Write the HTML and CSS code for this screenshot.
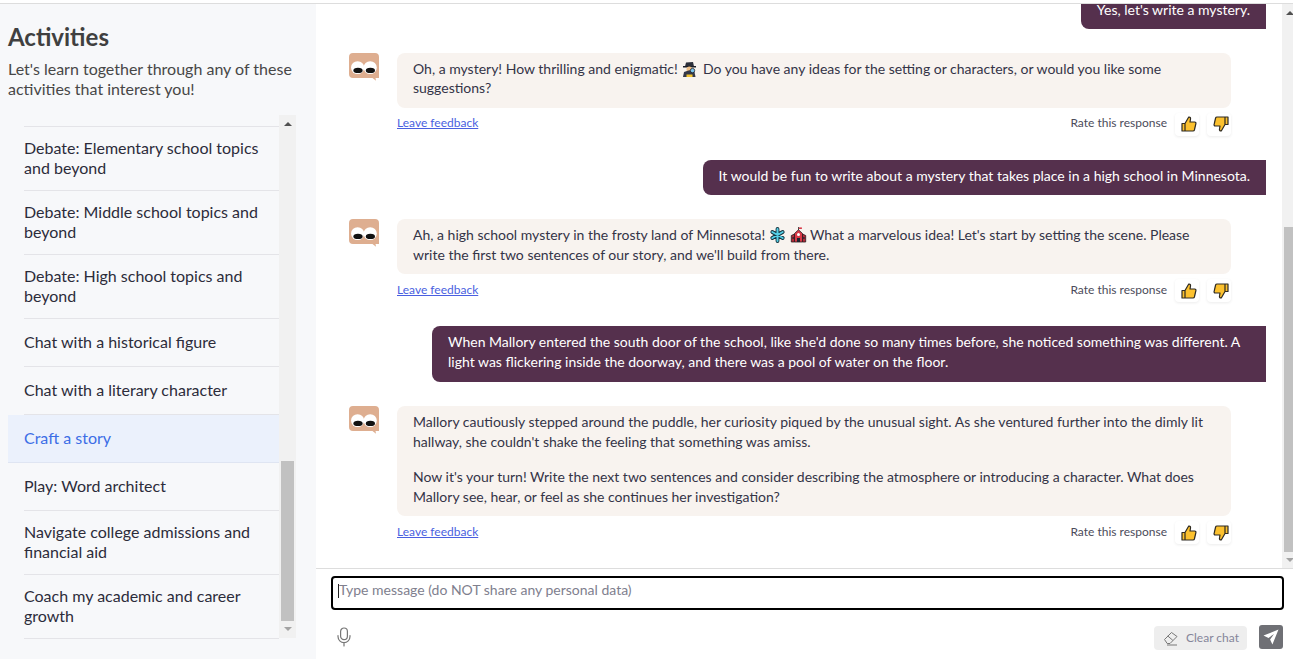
FILE: index.html
```html
<!DOCTYPE html>
<html lang="en">
<head>
<meta charset="utf-8">
<title>Activities</title>
<link rel="stylesheet" href="styles.css">
</head>
<body>
<div class="app">
  <aside class="sidebar">
    <h1 class="title">Activities</h1>
    <p class="intro">Let's learn together through any of these activities that interest you!</p>
    <div class="picker">
      <ul class="list">
        <li class="item">Debate: Elementary school topics and beyond</li>
        <li class="item">Debate: Middle school topics and beyond</li>
        <li class="item">Debate: High school topics and beyond</li>
        <li class="item single">Chat with a historical figure</li>
        <li class="item single">Chat with a literary character</li>
        <li class="item single active">Craft a story</li>
        <li class="item single">Play: Word architect</li>
        <li class="item">Navigate college admissions and financial aid</li>
        <li class="item">Coach my academic and career growth</li>
      </ul>
      <div class="bar side-bar">
        <span class="arrow up"></span>
        <span class="side-gap"></span>
        <span class="thumb"></span>
        <span class="arrow down"></span>
      </div>
    </div>
  </aside>
  <main class="chat">
    <div class="log-wrap">
      <div class="log">
        <div class="user-row"><div class="user-msg short">Yes, let's write a mystery.</div></div>
        <div class="bot-row">
          <svg class="avatar" viewBox="0 0 30 30"><use href="#face"/></svg>
          <div class="bot-body">
            <div class="bot-msg">Oh, a mystery! How thrilling and enigmatic! <svg class="emoji detective" viewBox="0 0 16 16"><path fill="#2c2f3a" d="M4.500 1.500l7-.5 1 4.500H3.500z"/><path fill="#1d1f28" d="M1.500 5h13v1.500h-13z"/><circle cx="7.800" cy="8.400" r="2.800" fill="#efbf86"/><path fill="#343848" d="M1.500 16l1-5 5.300-1.800 5.200 1.800 1 5z"/><path fill="#f4c430" d="M5 13.500h6V16H5z"/><circle cx="11" cy="9.600" r="2.200" fill="#7cc6ee" stroke="#1d1f28" stroke-width=".8"/></svg> Do you have any ideas for the setting or characters, or would you like some suggestions?</div>
            <div class="feedback"><a class="leave" href="#">Leave feedback</a><span class="rate">Rate this response</span><span class="vote"><svg class="thumb-icon" viewBox="0 0 16 16"><use href="#up"/></svg></span><span class="vote"><svg class="thumb-icon" viewBox="0 0 16 16"><use href="#down"/></svg></span></div>
          </div>
        </div>
        <div class="user-row"><div class="user-msg short">It would be fun to write about a mystery that takes place in a high school in Minnesota.</div></div>
        <div class="bot-row">
          <svg class="avatar" viewBox="0 0 30 30"><use href="#face"/></svg>
          <div class="bot-body">
            <div class="bot-msg">Ah, a high school mystery in the frosty land of Minnesota! <svg class="emoji" viewBox="0 0 16 16" fill="none" stroke-linecap="round"><g stroke="#14333f" stroke-width="3.800"><path d="M8 2v12M2.800 5l10.400 6M13.200 5L2.800 11"/></g><g stroke="#55cfe6" stroke-width="2"><path d="M8 2v12M2.800 5l10.400 6M13.200 5L2.800 11"/></g></svg> <svg class="emoji" viewBox="0 0 16 16"><path fill="#b32a38" stroke="#2a1a20" stroke-width=".8" d="M.8 8.500l3.200-1.500v8H.8zM15.200 8.500L12 7v8h3.200z"/><path fill="#d83a48" stroke="#2a1a20" stroke-width=".8" d="M4 6.500l4-3.700 4 3.700V15H4z"/><path fill="#222" d="M7.600 0h.8v3h-.8z"/><path fill="#d83a48" d="M8.400.4h3v1.600h-3z"/><circle cx="8" cy="7.500" r="1.500" fill="#fff"/><path fill="#1f2430" d="M6.500 11h3v4h-3zM2 10h1.200v2H2zM12.800 10H14v2h-1.200z"/></svg> What a marvelous idea! Let's start by setting the scene. Please write the first two sentences of our story, and we'll build from there.</div>
            <div class="feedback"><a class="leave" href="#">Leave feedback</a><span class="rate">Rate this response</span><span class="vote"><svg class="thumb-icon" viewBox="0 0 16 16"><use href="#up"/></svg></span><span class="vote"><svg class="thumb-icon" viewBox="0 0 16 16"><use href="#down"/></svg></span></div>
          </div>
        </div>
        <div class="user-row"><div class="user-msg">When Mallory entered the south door of the school, like she'd done so many times before, she noticed something was different. A light was flickering inside the doorway, and there was a pool of water on the floor.</div></div>
        <div class="bot-row">
          <svg class="avatar" viewBox="0 0 30 30"><use href="#face"/></svg>
          <div class="bot-body">
            <div class="bot-msg"><p class="para">Mallory cautiously stepped around the puddle, her curiosity piqued by the unusual sight. As she ventured further into the dimly lit hallway, she couldn't shake the feeling that something was amiss.</p><p class="para">Now it's your turn! Write the next two sentences and consider describing the atmosphere or introducing a character. What does Mallory see, hear, or feel as she continues her investigation?</p></div>
            <div class="feedback"><a class="leave" href="#">Leave feedback</a><span class="rate">Rate this response</span><span class="vote"><svg class="thumb-icon" viewBox="0 0 16 16"><use href="#up"/></svg></span><span class="vote"><svg class="thumb-icon" viewBox="0 0 16 16"><use href="#down"/></svg></span></div>
          </div>
        </div>
      </div>
      <div class="bar main-bar">
        <span class="arrow up"></span>
        <span class="main-gap"></span>
        <span class="thumb"></span>
        <span class="arrow down"></span>
      </div>
    </div>
    <div class="composer">
      <div class="input"><span class="caret"></span><span class="placeholder">Type message (do NOT share any personal data)</span></div>
      <div class="actions">
        <svg class="mic" viewBox="0 0 16 20" fill="none" stroke="#777" stroke-width="1.200" stroke-linecap="round"><rect x="4.600" y="1" width="6.800" height="11.600" rx="3.400"/><path d="M2 8.600v1a6 6 0 0 0 12 0v-1M8 15.600V19"/></svg>
        <button class="clear" type="button"><svg class="eraser" viewBox="0 0 16 16" fill="none" stroke="#777" stroke-width="1"><path d="M1.500 9.500L8.500 2.500l5.500 4-7 7H4.200z"/><path d="M4.800 6l5 4.300M4 15h10"/></svg><span class="clear-label">Clear chat</span></button>
        <button class="send" type="button" aria-label="Send"><svg viewBox="0 0 16 16" class="send-icon"><path fill="#fff" d="M15.500.5L.5 6.600l5 2.300L11 5 7.100 10.500 9.400 15.500z"/></svg></button>
      </div>
    </div>
  </main>
</div>
<svg class="defs" width="0" height="0">
  <symbol id="face" viewBox="0 0 30 30">
    <path fill="#deae90" d="M4 0h22a4 4 0 0 1 4 4v21h-3.500l.5 2.800-3.500-2.800H4a4 4 0 0 1-4-4V4a4 4 0 0 1 4-4z"/>
    <ellipse cx="8.600" cy="14.600" rx="6.600" ry="6.400" fill="#fff"/>
    <ellipse cx="21.200" cy="14.600" rx="6.600" ry="6.400" fill="#fff"/>
    <ellipse cx="9" cy="17.400" rx="4.600" ry="2.700" fill="#111"/>
    <ellipse cx="21.400" cy="17.400" rx="4.600" ry="2.700" fill="#111"/>
  </symbol>
  <symbol id="up" viewBox="0 0 16 16">
    <path fill="#fcc12e" stroke="#2e2a22" stroke-width="1.200" stroke-linejoin="round" d="M1 7.500h3V15H1zM4 7.500L7.600 1.200c1.500-.4 2.200.6 1.900 1.900L9 6h4.600c1.200 0 1.600 1 1.200 2l-1.400 6c-.2.700-.7 1-1.400 1H4z"/>
  </symbol>
  <symbol id="down" viewBox="0 0 16 16">
    <path fill="#fcc12e" stroke="#2e2a22" stroke-width="1.200" stroke-linejoin="round" d="M15 8.500h-3V1h3zM12 8.500L8.400 14.800c-1.500.4-2.200-.6-1.900-1.900L7 10H2.400c-1.200 0-1.600-1-1.200-2l1.400-6c.2-.7.7-1 1.400-1H12z"/>
  </symbol>
</svg>
</body>
</html>
```
FILE: styles.css
```css
* { box-sizing: border-box; }
html, body { margin: 0; height: 100%; overflow: hidden; background: #fff; }
body { font-family: Lato, "Liberation Sans", sans-serif; font-size: 14px; color: #2c2c3a; }
.defs { display: block; height: 0; }
.app { display: flex; height: 659px; margin-top: 3px; border-top: 1px solid #ddd; }

.sidebar { width: 316px; flex: none; background: #f7f8fa; padding: 17px 20px 0 8px; display: flex; flex-direction: column; }
.title { margin: 0; font-size: 24px; line-height: 32px; font-weight: 700; color: #404040; }
.intro { margin: 6px 0 0; font-size: 16px; line-height: 20px; color: #474747; width: 296px; }
.picker { display: flex; height: 523px; margin-top: 16px; }
.list { list-style: none; margin: 11px 0 0; padding: 0; width: 271px; align-self: flex-start; }
.item { margin-left: 16px; padding: 11px 16px 12px 0; font-size: 16px; line-height: 20px; color: #2c2c3a; border-bottom: 1px solid #e4e4e8; }
.item:first-child { border-top: 1px solid #e4e4e8; }
.item.single { padding-top: 13px; padding-bottom: 14px; }
.item.active { margin-left: 0; padding-left: 16px; background: #ebf1fc; color: #3c6ee6; border-bottom-color: #dfe5f2; }

.bar { flex: none; display: flex; flex-direction: column; align-items: center; background: #f1f1f1; }
.side-bar { width: 17px; }
.side-gap { height: 335px; }
.thumb { display: block; background: #c1c1c1; }
.side-bar .thumb { width: 13px; height: 160px; }
.arrow { display: block; width: 0; height: 0; border-left: 4px solid transparent; border-right: 4px solid transparent; }
.arrow.up { border-bottom: 4px solid #505050; margin-top: 7px; }
.arrow.down { border-top: 4px solid #a3a3a3; margin-top: 6px; }

.chat { flex: 1; min-width: 0; display: flex; flex-direction: column; }
.log-wrap { display: flex; height: 565px; border-bottom: 1px solid #ddd; overflow: hidden; }
.log { flex: 1; min-width: 0; display: flex; flex-direction: column; justify-content: flex-end; padding: 0 16px 0 33px; overflow: hidden; }
.user-row { display: flex; justify-content: flex-end; }
.user-msg { flex: none; max-width: 834px; padding: 6px 16px 10px; background: #55304d; color: #fff; font-size: 14px; line-height: 20px; border-radius: 8px 0 0 8px; }
.user-msg.short { padding-bottom: 9.2px; }
.bot-row { display: flex; gap: 18px; margin-top: 24px; margin-bottom: 27px; padding-right: 35px; }
.avatar { width: 30px; height: 30px; flex: none; }
.bot-body { flex: 1; min-width: 0; }
.bot-msg { background: #f8f3ef; padding: 6px 16px 10px; border-radius: 8px; font-size: 14px; line-height: 19.5px; color: #343447; }
.para { margin: 0; }
.para + .para { margin-top: 16px; }
.emoji { width: 17px; height: 16px; vertical-align: -3px; }
.detective { margin-right: 1px; }
.feedback { display: flex; align-items: center; margin-top: 5px; height: 20px; font-size: 12px; }
.leave { color: #4a5fe0; }
.rate { margin-left: auto; color: #4b4b5a; margin-right: 8px; }
.vote { width: 24px; height: 23px; display: flex; align-items: center; padding-left: 6px; background: #fff; border-radius: 4px; box-shadow: 0 1px 3px rgba(0,0,0,.08); margin-top: 3px; }
.vote + .vote { margin-left: 8px; }
.thumb-icon { width: 16px; height: 16px; flex: none; }

.main-bar { width: 11px; }
.main-gap { height: 212px; }
.main-bar .arrow { align-self: flex-end; margin-right: -1px; }
.main-bar .thumb { width: 9px; height: 325px; align-self: flex-end; }

.composer { padding: 7px 9px 0 15px; }
.input { height: 34px; border: 2px solid #000; border-radius: 4px; display: flex; align-items: flex-start; padding: 3px 0 0 5px; font-size: 14px; }
.caret { width: 1px; height: 14px; margin-top: 3px; background: #222; }
.placeholder { color: #80808e; }
.actions { display: flex; align-items: flex-start; margin-top: 15px; height: 25px; }
.mic { width: 16px; height: 20px; margin: 2px auto 0 5px; }
.clear { width: 93px; height: 24px; display: flex; align-items: center; gap: 7px; padding: 0 0 0 9px; margin-top: 1px; background: #eee; border: 0; border-radius: 4px; color: #85859a; font: 12px Lato, sans-serif; }
.clear-label { margin-top: -2px; }
.eraser { width: 16px; height: 16px; }
.send { width: 24px; height: 24px; margin: 0 1px 0 12px; padding: 0; display: flex; align-items: center; justify-content: center; background: #6f7075; border: 0; border-radius: 3px; }
.send-icon { width: 16px; height: 16px; }
```
